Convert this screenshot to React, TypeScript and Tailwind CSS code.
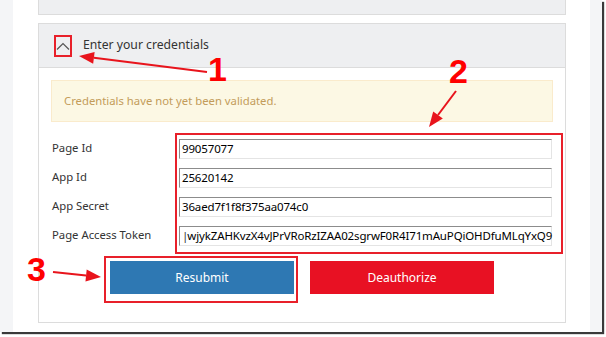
const fields = [
  { label: "Page Id", value: "99057077" },
  { label: "App Id", value: "25620142" },
  { label: "App Secret", value: "36aed7f1f8f375aa074c0" },
  { label: "Page Access Token", value: "wjykZAHKvzX4vJPrVRoRzIZAA02sgrwF0R4I71mAuPQiOHDfuMLqYxQ9" },
];

function Arrow({ x1, y1, x2, y2 }: { x1: number; y1: number; x2: number; y2: number }) {
  const a = Math.atan2(y2 - y1, x2 - x1);
  const len = 15;
  const w = 6;
  const bx = x2 - Math.cos(a) * len;
  const by = y2 - Math.sin(a) * len;
  const px = -Math.sin(a) * w;
  const py = Math.cos(a) * w;
  return (
    <g>
      <line x1={x1} y1={y1} x2={bx} y2={by} stroke="#e8141c" strokeWidth="2" />
      <polygon points={`${x2},${y2} ${bx + px},${by + py} ${bx - px},${by - py}`} fill="#e8141c" />
    </g>
  );
}

export default function App() {
  return (
    <div className="relative w-[606px] h-[337px] bg-white overflow-hidden" style={{ fontFamily: '"Noto Sans", "Open Sans", sans-serif' }}>
      <div className="flex w-[602px] h-[332px] shadow-[2px_2px_1px_#3a3a3a]">
        <div className="w-[13px] bg-[#f4f5f7]" />
        <div className="flex-1 bg-white px-[25px] pr-[24px] flex flex-col">
          <div className="h-[15px] bg-[#eeeff1] border-x border-b border-[#dcdcdc]" />
          <div className="mt-[8px] h-[300px] border border-[#dcdcdc] flex flex-col">
            <div className="h-[44px] bg-[#eeeff1] border-b border-[#dcdcdc] flex items-center pl-[15px]">
              <div className="w-[18px] h-[22px] border-2 border-[#e8202a] flex items-center justify-center">
                <svg width="14" height="8" viewBox="0 0 14 8">
                  <path d="M1 7.5 L7 1.5 L13 7.5" fill="none" stroke="#555" strokeWidth="1.2" />
                </svg>
              </div>
              <span className="ml-[11px] text-[12.2px] text-[#333] leading-none">Enter your credentials</span>
            </div>
            <div className="p-[12px] flex flex-col">
              <div className="h-[42px] bg-[#fcf8e4] border border-[#faebcc] flex items-center pl-[12px] text-[11.3px] text-[#c39c5a]">
                Credentials have not yet been validated.
              </div>
              <div className="mt-[17px] flex flex-col gap-[9px]">
                {fields.map((f, i) => (
                  <div key={f.label} className="flex items-center h-[20px]">
                    <div className="w-[128px] pl-px text-[11.3px] text-[#333] -mt-[2px]">{f.label}</div>
                    <div className="w-[373px] h-[20px] border border-t-[#8c8c8c] border-l-[#8c8c8c] border-r-[#e4e4e4] border-b-[#e4e4e4] bg-white flex items-center pl-[2px] text-[11.5px] text-black whitespace-nowrap">
                      {i === 3 && <span className="text-[#333] -mr-px">|</span>}
                      <span className="tracking-[-0.15px]">{f.value}</span>
                    </div>
                  </div>
                ))}
              </div>
              <div className="mt-[15px] ml-[59px] flex gap-[16px]">
                <button className="w-[184px] h-[33px] bg-[#2e78b3] text-white text-[12px]">Resubmit</button>
                <button className="w-[184px] h-[33px] bg-[#e81123] text-white text-[12px]">Deauthorize</button>
              </div>
            </div>
          </div>
        </div>
        <div className="w-[12px] bg-[#f4f5f7]" />
      </div>

      <div className="absolute left-[175px] top-[133px] w-[388px] h-[121px] border-2 border-[#e8202a]" />
      <div className="absolute left-[104px] top-[256px] w-[194px] h-[47px] border-2 border-[#e8202a]" />

      <svg className="absolute left-0 top-0" width="606" height="337">
        <Arrow x1={207} y1={72} x2={79} y2={56} />
        <Arrow x1={456} y1={91} x2={429} y2={127} />
        <Arrow x1={53} y1={272} x2={101} y2={277} />
      </svg>
      <div className="absolute left-[208px] top-[52px] text-[34px] font-bold text-[#f00] leading-none" style={{ fontFamily: '"Liberation Sans", Arial, sans-serif' }}>1</div>
      <div className="absolute left-[449px] top-[54px] text-[34px] font-bold text-[#f00] leading-none" style={{ fontFamily: '"Liberation Sans", Arial, sans-serif' }}>2</div>
      <div className="absolute left-[27px] top-[252px] text-[34px] font-bold text-[#f00] leading-none" style={{ fontFamily: '"Liberation Sans", Arial, sans-serif' }}>3</div>
    </div>
  );
}
